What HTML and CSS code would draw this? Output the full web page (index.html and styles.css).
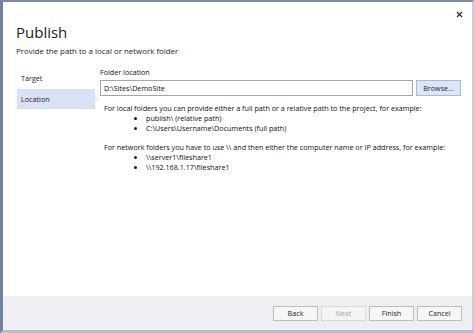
FILE: index.html
```html
<!DOCTYPE html>
<html lang="en">
<head>
    <meta charset="UTF-8">
    <title>Publish</title>
    <link rel="stylesheet" href="styles.css">
</head>
<body>
    <div class="dialog">
        <div class="header">
            <div class="heading">
                <h1 class="title">Publish</h1>
                <p class="subtitle">Provide the path to a local or network folder</p>
            </div>
            <button type="button" class="close-btn" aria-label="Close">
                <svg width="7" height="7" viewBox="0 0 7 7">
                    <path d="M1 1 L6 6 M6 1 L1 6" stroke="#2a2a2a" stroke-width="1.2" fill="none"/>
                </svg>
            </button>
        </div>

        <div class="main">
            <ul class="steps">
                <li class="step">Target</li>
                <li class="step active">Location</li>
            </ul>

            <div class="content">
                <label class="field-label" for="folder">Folder location</label>
                <div class="field-row">
                    <input type="text" id="folder" class="field-input" value="D:\Sites\DemoSite">
                    <button type="button" class="browse-btn">Browse...</button>
                </div>

                <div class="help">
                    <p>For local folders you can provide either a full path or a relative path to the project, for example:</p>
                    <ul>
                        <li>publish\ (relative path)</li>
                        <li>C:\Users\Username\Documents (full path)</li>
                    </ul>
                </div>

                <div class="help">
                    <p>For network folders you have to use \\ and then either the computer name or IP address, for example:</p>
                    <ul>
                        <li>\\server1\fileshare1</li>
                        <li>\\192.168.1.17\fileshare1</li>
                    </ul>
                </div>
            </div>
        </div>

        <div class="footer">
            <button type="button" class="btn">Back</button>
            <button type="button" class="btn" disabled>Next</button>
            <button type="button" class="btn">Finish</button>
            <button type="button" class="btn">Cancel</button>
        </div>
    </div>
</body>
</html>
```

FILE: styles.css
```css
* {
    margin: 0;
    padding: 0;
    box-sizing: border-box;
}

body {
    font-family: 'Open Sans', 'Noto Sans', sans-serif;
    color: #1e1e1e;
    background: #ffffff;
    width: 474px;
    height: 333px;
    overflow: hidden;
}

.dialog {
    height: 100%;
    display: flex;
    flex-direction: column;
    border-top: 2px solid #7e8aac;
    border-left: 3px solid #7080a8;
    border-right: 2px solid #c8ccd8;
    border-bottom: 3px solid #b8bcc8;
    background: #ffffff;
}

.header {
    display: flex;
    justify-content: space-between;
    align-items: flex-start;
    padding: 21px 9px 0 13px;
}

.title {
    font-size: 15px;
    font-weight: 400;
    line-height: 19px;
    color: #222;
}

.subtitle {
    font-size: 7.9px;
    line-height: 12px;
    margin-top: 3px;
    color: #1e1e1e;
}

.close-btn {
    background: none;
    border: none;
    width: 7px;
    height: 7px;
    margin-top: -12px;
    display: flex;
    align-items: center;
    justify-content: center;
}

.main {
    flex: 1;
    display: flex;
    padding: 9px 0 0 14px;
}

.steps {
    list-style: none;
    width: 78px;
    padding-top: 2px;
}

.step {
    font-size: 7.2px;
    height: 20px;
    line-height: 20px;
    padding-left: 4px;
    margin-bottom: 1px;
    color: #1e1e1e;
}

.step.active {
    background: #dbe1f4;
    position: relative;
}

.step.active::after {
    content: "";
    position: absolute;
    right: -4px;
    top: 6px;
    border-top: 4px solid transparent;
    border-bottom: 4px solid transparent;
    border-left: 4px solid #eef1fa;
}

.content {
    flex: 1;
    padding: 1px 11px 0 5px;
    font-size: 7.2px;
    color: #111;
}

.field-label {
    display: block;
    line-height: 10px;
    margin-bottom: 3px;
}

.field-row {
    display: flex;
    gap: 3px;
    margin-bottom: 7px;
}

.field-input {
    flex: 1;
    height: 16px;
    border: 1px solid #a6a6a6;
    padding: 0 3px;
    font-family: inherit;
    font-size: 7.2px;
    color: #111;
}

.browse-btn {
    width: 45px;
    height: 16px;
    background: #dce7f5;
    border: 1px solid #9dbde2;
    font-family: inherit;
    font-size: 7.2px;
    color: #1e1e1e;
}

.help {
    padding-left: 4px;
    line-height: 10px;
    margin-bottom: 9px;
}

.help ul {
    list-style: none;
    padding-left: 42px;
}

.help li {
    position: relative;
}

.help li::before {
    content: "";
    position: absolute;
    left: -12px;
    top: 4px;
    width: 3px;
    height: 3px;
    border-radius: 50%;
    background: #1e1e1e;
}

.footer {
    height: 34px;
    background: #efeef2;
    display: flex;
    justify-content: flex-end;
    align-items: center;
    gap: 3px;
    padding: 0 10px 0 0;
}

.btn {
    width: 45px;
    height: 15px;
    background: #f6f6f6;
    border: 1px solid #bdbdbd;
    font-family: inherit;
    font-size: 7.2px;
    color: #1e1e1e;
}

.btn:disabled {
    background: #f4f4f4;
    border-color: #d9d9d9;
    color: #a5a5a5;
}
```
